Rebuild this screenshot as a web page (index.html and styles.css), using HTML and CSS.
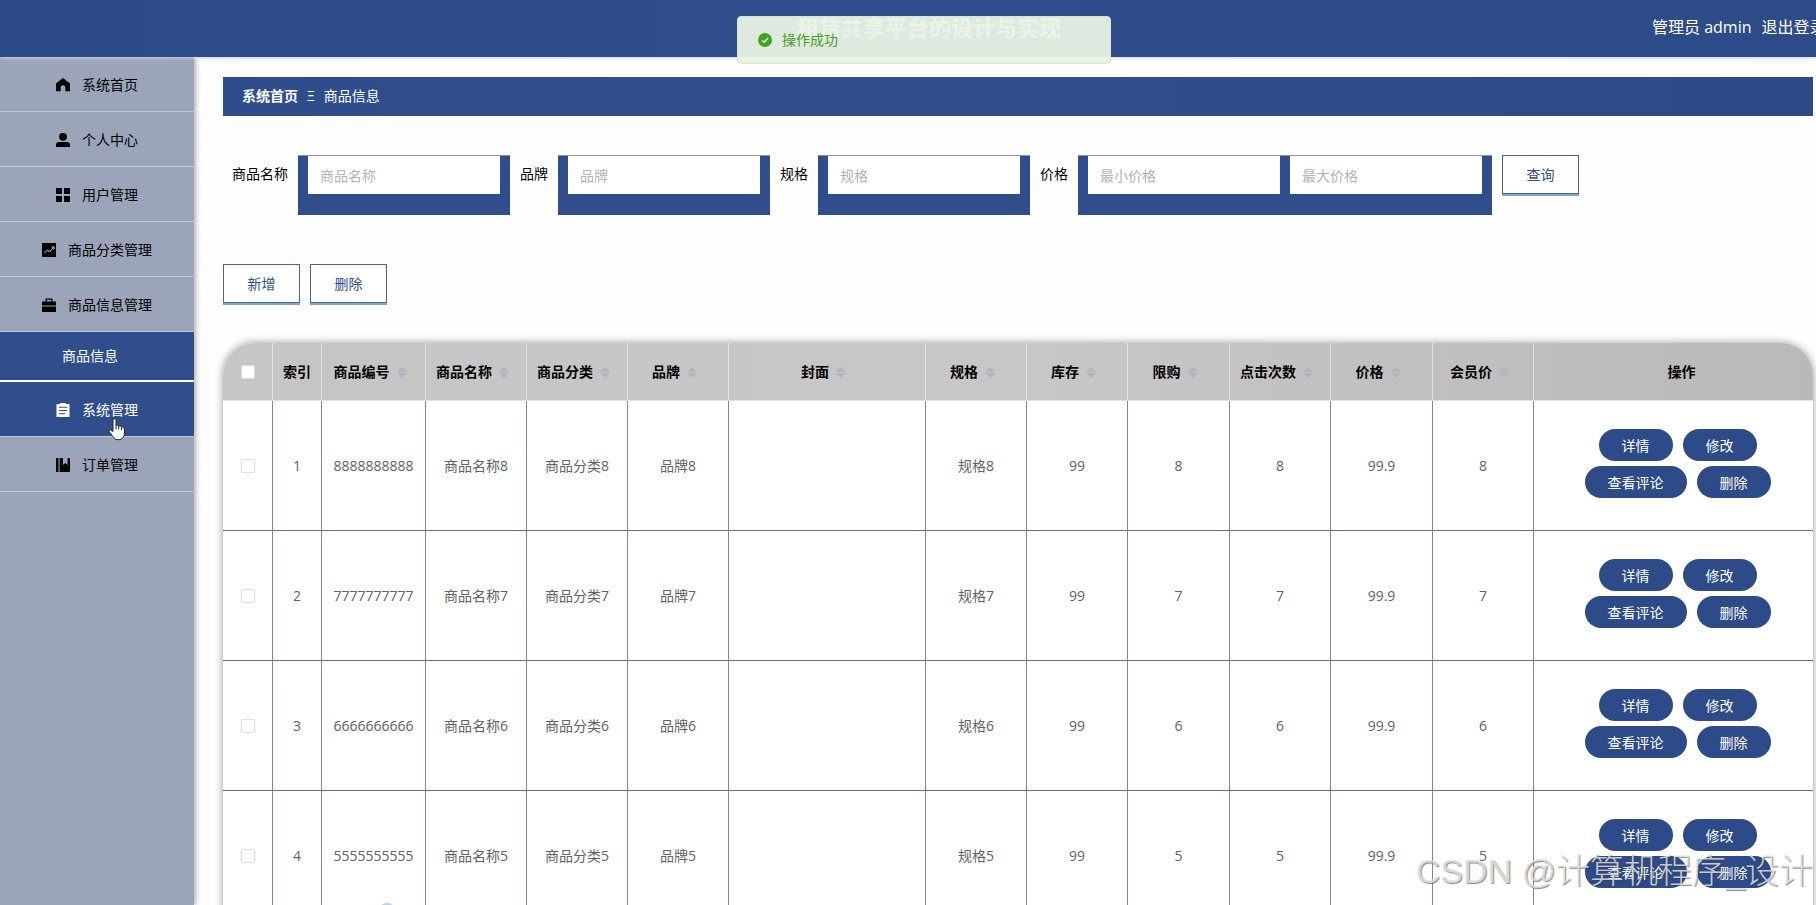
FILE: index.html
```html
<!DOCTYPE html>
<html lang="zh-CN">
<head>
    <meta charset="UTF-8">
    <meta name="viewport" content="width=device-width, initial-scale=1.0">
    <title>租赁共享平台的设计与实现</title>
    <link rel="stylesheet" href="styles.css">
</head>
<body>

    <!-- 顶部 -->
    <header class="header">
        <h1 class="header-title">租赁共享平台的设计与实现</h1>
        <div class="header-user">
            <span>管理员 admin</span>
            <a href="#">退出登录</a>
        </div>
    </header>

    <div class="layout">
        <!-- 侧边菜单 -->
        <nav class="sidebar">
            <a class="menu-item" href="#">
                <svg class="menu-icon" viewBox="0 0 14 14"><path d="M7 0 L13.4 5 Q14 5.500 14 6.200 V13.200 H9.300 V9 Q9.300 7.200 7 7.200 Q4.700 7.200 4.700 9 V13.200 H0 V6.200 Q0 5.500 .6 5 Z"/></svg>
                <span>系统首页</span>
            </a>
            <a class="menu-item" href="#">
                <svg class="menu-icon" viewBox="0 0 14 14"><circle cx="7" cy="3.800" r="3.900"/><path d="M0 14 V12 Q0 9 3 9 H11 Q14 9 14 12 V14 Z"/></svg>
                <span>个人中心</span>
            </a>
            <a class="menu-item" href="#">
                <svg class="menu-icon" viewBox="0 0 14 14"><path d="M0 0H6V6H0Z M8 0H14V6H8Z M0 8H6V14H0Z M8 8H14V14H8Z"/></svg>
                <span>用户管理</span>
            </a>
            <a class="menu-item" href="#">
                <svg class="menu-icon" viewBox="0 0 14 14"><path d="M0 0H14V14H0Z"/><path class="icon-line" d="M2.300 10 L5.500 7 L7.500 9 L11.500 4.500 M9.500 4 H12 V6.500"/></svg>
                <span>商品分类管理</span>
            </a>
            <a class="menu-item" href="#">
                <svg class="menu-icon" viewBox="0 0 14 14"><path fill-rule="evenodd" d="M3.500 3.500 V.5 H10.500 V3.500 H14 V7.500 H0 V3.500 Z M4.800 1.700 V3.500 H9.200 V1.700 Z M0 8.500 H14 V14 H0 Z"/></svg>
                <span>商品信息管理</span>
            </a>
            <a class="menu-sub" href="#">商品信息</a>
            <a class="menu-item active" href="#">
                <svg class="menu-icon" viewBox="0 0 14 14"><path fill-rule="evenodd" d="M.5 1H4V0H10V1H13.500V14H.5Z M3 3.800V4.800H11V3.800Z M3 7V8H11V7Z M3 10.200V11.200H9V10.200Z"/></svg>
                <span>系统管理</span>
            </a>
            <a class="menu-item" href="#">
                <svg class="menu-icon" viewBox="0 0 14 14"><path d="M0 0H2.500V14H0Z M3.600 0H7V7L9.300 5L11.600 7V0H14V14H3.600Z"/></svg>
                <span>订单管理</span>
            </a>
        </nav>

        <!-- 主内容区域 -->
        <main class="main">
            <div class="breadcrumb">
                <a href="#">系统首页</a>
                <span>Ξ</span>
                <span>商品信息</span>
            </div>

            <form class="search">
                <div class="search-item">
                    <label for="name">商品名称</label>
                    <div class="search-box"><input type="text" id="name" placeholder="商品名称"></div>
                </div>
                <div class="search-item">
                    <label for="brand">品牌</label>
                    <div class="search-box"><input type="text" id="brand" placeholder="品牌"></div>
                </div>
                <div class="search-item">
                    <label for="spec">规格</label>
                    <div class="search-box"><input type="text" id="spec" placeholder="规格"></div>
                </div>
                <div class="search-item">
                    <label for="priceMin">价格</label>
                    <div class="search-box">
                        <input type="text" id="priceMin" placeholder="最小价格">
                        <input type="text" id="priceMax" placeholder="最大价格" aria-label="最大价格">
                    </div>
                </div>
                <button type="button" class="btn">查询</button>
            </form>

            <div class="toolbar">
                <button type="button" class="btn">新增</button>
                <button type="button" class="btn">删除</button>
            </div>

            <!-- 商品表格 -->
            <div class="table-wrap">
                <table id="goodsTable">
                    <colgroup>
                        <col class="col-check"><col class="col-index"><col class="col-no">
                        <col class="col-text"><col class="col-text"><col class="col-text">
                        <col class="col-cover">
                        <col class="col-text"><col class="col-text"><col class="col-wide">
                        <col class="col-text"><col class="col-wide"><col class="col-text">
                        <col>
                    </colgroup>
                    <thead>
                        <tr>
                            <th><input type="checkbox" aria-label="全选"></th>
                            <th>索引</th>
                            <th class="sortable">商品编号</th>
                            <th class="sortable">商品名称</th>
                            <th class="sortable">商品分类</th>
                            <th class="sortable">品牌</th>
                            <th class="sortable">封面</th>
                            <th class="sortable">规格</th>
                            <th class="sortable">库存</th>
                            <th class="sortable">限购</th>
                            <th class="sortable">点击次数</th>
                            <th class="sortable">价格</th>
                            <th class="sortable">会员价</th>
                            <th class="actions-head">操作</th>
                        </tr>
                    </thead>
                    <tbody></tbody>
                </table>
            </div>
        </main>
    </div>

    <!-- 消息提示 -->
    <div class="message" role="alert">
        <svg class="message-icon" viewBox="0 0 14 14"><circle cx="7" cy="7" r="7"/><path d="M4 7.200 L6.200 9.300 L10.200 5"/></svg>
        <span>操作成功</span>
    </div>

    <svg class="pointer" viewBox="0 0 18 24"><path d="M6 1.500 Q7.800 .6 8 2.800 V8.500 Q9.800 7.500 10.600 9.200 Q12.400 8.300 13.300 10 Q16 9.200 16.500 12 V16.500 Q16.300 19 15 20.500 Q14 22.800 10.500 22.800 Q7 22.800 5.600 20.500 L1.200 14.800 Q.6 12.800 2.600 12.700 L5 14.500 V3 Q5 1.800 6 1.500 Z"/><path d="M8 8.500V12.500 M10.700 9.500V12.500 M13.400 10.500V13"/></svg>
    <div class="ripple"></div>
    <div class="watermark">CSDN @计算机程序_设计</div>

    <script>
        const numbers = [8, 7, 6, 5];
        const tableBody = document.getElementById('goodsTable').getElementsByTagName('tbody')[0];

        // 表头排序图标
        document.querySelectorAll('.sortable').forEach(function(th) {
            const caret = document.createElement('span');
            caret.className = 'caret';
            th.appendChild(caret);
        });

        numbers.forEach(function(n, i) {
            const row = tableBody.insertRow();
            const values = [i + 1, String(n).repeat(10), '商品名称' + n, '商品分类' + n, '品牌' + n, '',
                '规格' + n, 99, n, n, '99.9', n];

            row.insertCell().innerHTML = '<input type="checkbox" aria-label="选择第' + (i + 1) + '行">';
            values.forEach(function(value) {
                row.insertCell().textContent = value;
            });

            const actions = row.insertCell();
            actions.className = 'actions';
            actions.innerHTML =
                '<div class="action-row"><button type="button">详情</button><button type="button">修改</button></div>' +
                '<div class="action-row"><button type="button">查看评论</button><button type="button">删除</button></div>';
        });
    </script>
</body>
</html>
```

FILE: styles.css
```css
* {
    box-sizing: border-box;
}

body {
    margin: 0;
    height: 100vh;
    overflow: hidden;
    display: flex;
    flex-direction: column;
    position: relative;
    background-color: #fefefe;
    color: #000000;
    font-family: "Open Sans", "Noto Sans CJK SC", sans-serif;
    font-size: 14px;
    line-height: 20px;
}

a {
    color: inherit;
    text-decoration: none;
}

input,
button {
    font-family: inherit;
    font-size: 14px;
}

/* 顶部 */
.header {
    flex: 0 0 57px;
    display: flex;
    padding-left: 206px;
    background: linear-gradient(90deg, #2c4a88, #304e8c 45%, #2e4b89);
    box-shadow: 0 1px 4px #c8d4f4;
    color: #ffffff;
    white-space: nowrap;
    z-index: 1;
}

.header-title {
    flex: 1;
    margin: 0;
    font-size: 22px;
    line-height: 54px;
    text-align: center;
}

.header-user {
    flex: 0 0 164px;
    min-width: 0;
    display: flex;
    gap: 10px;
    font-size: 16px;
    line-height: 54px;
}

.layout {
    flex: 1;
    min-height: 0;
    display: flex;
}

/* 侧边菜单 */
.sidebar {
    flex: 0 0 194px;
    background-color: #9ba4b8;
    box-shadow: 1px 0 6px rgba(0, 0, 0, 0.4);
}

.menu-item {
    display: flex;
    align-items: center;
    justify-content: center;
    gap: 12px;
    height: 55px;
    padding-top: 2px;
    border-bottom: 1px solid #c3c8d3;
}

.menu-icon {
    width: 14px;
    height: 14px;
    fill: currentColor;
}

.icon-line {
    fill: none;
    stroke: #d4d8e0;
}

.menu-sub {
    display: block;
    padding-right: 14px;
    background-color: #304e8c;
    border-bottom: 2px solid #ffffff;
    color: #ffffff;
    line-height: 48px;
    text-align: center;
}

.menu-item.active {
    background-color: #304e8c;
    color: #ffffff;
}

/* 主内容区域 */
.main {
    flex: 1;
    min-width: 0;
    padding: 20px 3px 0 29px;
}

.breadcrumb {
    display: flex;
    gap: 9px;
    height: 39px;
    padding: 0 19px;
    background: linear-gradient(90deg, #2f4d8b, #304e8c 50%, #2c4a88);
    color: #ffffff;
    line-height: 38px;
}

.breadcrumb a {
    font-weight: bold;
}

/* 搜索 */
.search {
    display: flex;
    gap: 10px;
    margin: 39px 0 49px 9px;
}

.search-item {
    display: flex;
    gap: 10px;
}

.search-item label {
    line-height: 38px;
}

.search-box {
    display: flex;
    align-items: flex-start;
    gap: 10px;
    height: 60px;
    padding: 0 10px;
    background-color: #304e8c;
    border-top: 1px solid #8595b5;
}

.search-box input {
    width: 192px;
    height: 38px;
    padding: 0 12px;
    border: 0;
    background-color: #ffffff;
}

.search-box input::placeholder {
    color: #b0b3ba;
}

.btn {
    width: 77px;
    height: 39px;
    padding: 0 0 2px;
    border: 1px solid #4a659a;
    background-color: #ffffff;
    box-shadow: 0 2px 0 #78abc8;
    color: #304e8c;
    cursor: pointer;
}

.toolbar {
    display: flex;
    gap: 10px;
    margin-bottom: 40px;
}

/* 表格 */
.table-wrap {
    overflow: hidden;
    border-radius: 32px 32px 0 0;
    box-shadow: 0 0 8px rgba(0, 0, 0, 0.4);
    background-color: #ffffff;
}

table {
    width: 100%;
    table-layout: fixed;
    border-collapse: separate;
    border-spacing: 0;
}

.col-check {
    width: 50px;
}

.col-index {
    width: 49px;
}

.col-no {
    width: 104px;
}

.col-text {
    width: 101px;
}

.col-wide {
    width: 102px;
}

.col-cover {
    width: 197px;
}

thead {
    background: linear-gradient(90deg, #c5c5c5, #c7c7c7 50%, #b9b9b9);
}

th,
td {
    padding: 0;
    text-align: center;
    white-space: nowrap;
}

th {
    height: 58px;
    border-right: 1px solid #e2e2e2;
    border-bottom: 1px solid #e2e2e2;
}

td {
    height: 130px;
    border-right: 1px solid #8584a0;
    border-bottom: 1px solid #6c6a8e;
    color: #606266;
}

th:last-child,
td:last-child {
    border-right: 0;
}

input[type="checkbox"] {
    appearance: none;
    display: block;
    width: 14px;
    height: 14px;
    margin: 0 auto;
    border: 1px solid #dcdfe6;
    border-radius: 2px;
    background-color: #ffffff;
}

/* 排序图标 */
.caret {
    display: inline-flex;
    flex-direction: column;
    align-items: center;
    gap: 1px;
    width: 24px;
    vertical-align: middle;
}

.caret::before,
.caret::after {
    content: "";
    border: 5px solid transparent;
}

.caret::before {
    border-top: 0;
    border-bottom-color: #b0b4be;
}

.caret::after {
    border-bottom: 0;
    border-top-color: #b0b4be;
}

.actions-head {
    padding-left: 16px;
}

.actions {
    padding-left: 8px;
}

.action-row {
    display: flex;
    justify-content: center;
    gap: 10px;
    margin-bottom: 5px;
}

.action-row button {
    height: 32px;
    padding: 0 23px;
    border: 0;
    border-radius: 16px;
    background-color: #2d4b89;
    color: #ffffff;
    cursor: pointer;
}

/* 消息提示 */
.message {
    position: absolute;
    top: 16px;
    left: 737px;
    z-index: 2;
    display: flex;
    align-items: center;
    gap: 10px;
    width: 374px;
    height: 48px;
    padding: 0 20px;
    border: 1px solid #d4e6cc;
    border-radius: 4px;
    background-color: rgba(233, 243, 228, 0.94);
    color: #46a024;
}

.message-icon {
    width: 14px;
    height: 14px;
    fill: #46a024;
}

.message-icon path {
    fill: none;
    stroke: #e6f2e0;
    stroke-width: 1.3;
}

.pointer {
    position: absolute;
    top: 417px;
    left: 108px;
    width: 18px;
    height: 24px;
    fill: #ffffff;
    stroke: #1c2433;
}

.ripple {
    position: absolute;
    top: 903px;
    left: 378px;
    width: 18px;
    height: 18px;
    border-radius: 50%;
    background-color: #a9d8fa;
}

.watermark {
    position: absolute;
    right: 3px;
    bottom: 12px;
    color: rgba(226, 226, 226, 0.85);
    font-family: "Liberation Sans", "Noto Sans CJK SC", sans-serif;
    font-size: 34px;
    font-weight: 300;
    line-height: 44px;
    text-shadow: 1px 1px 1px rgba(60, 60, 60, 0.6);
    white-space: nowrap;
}
```
